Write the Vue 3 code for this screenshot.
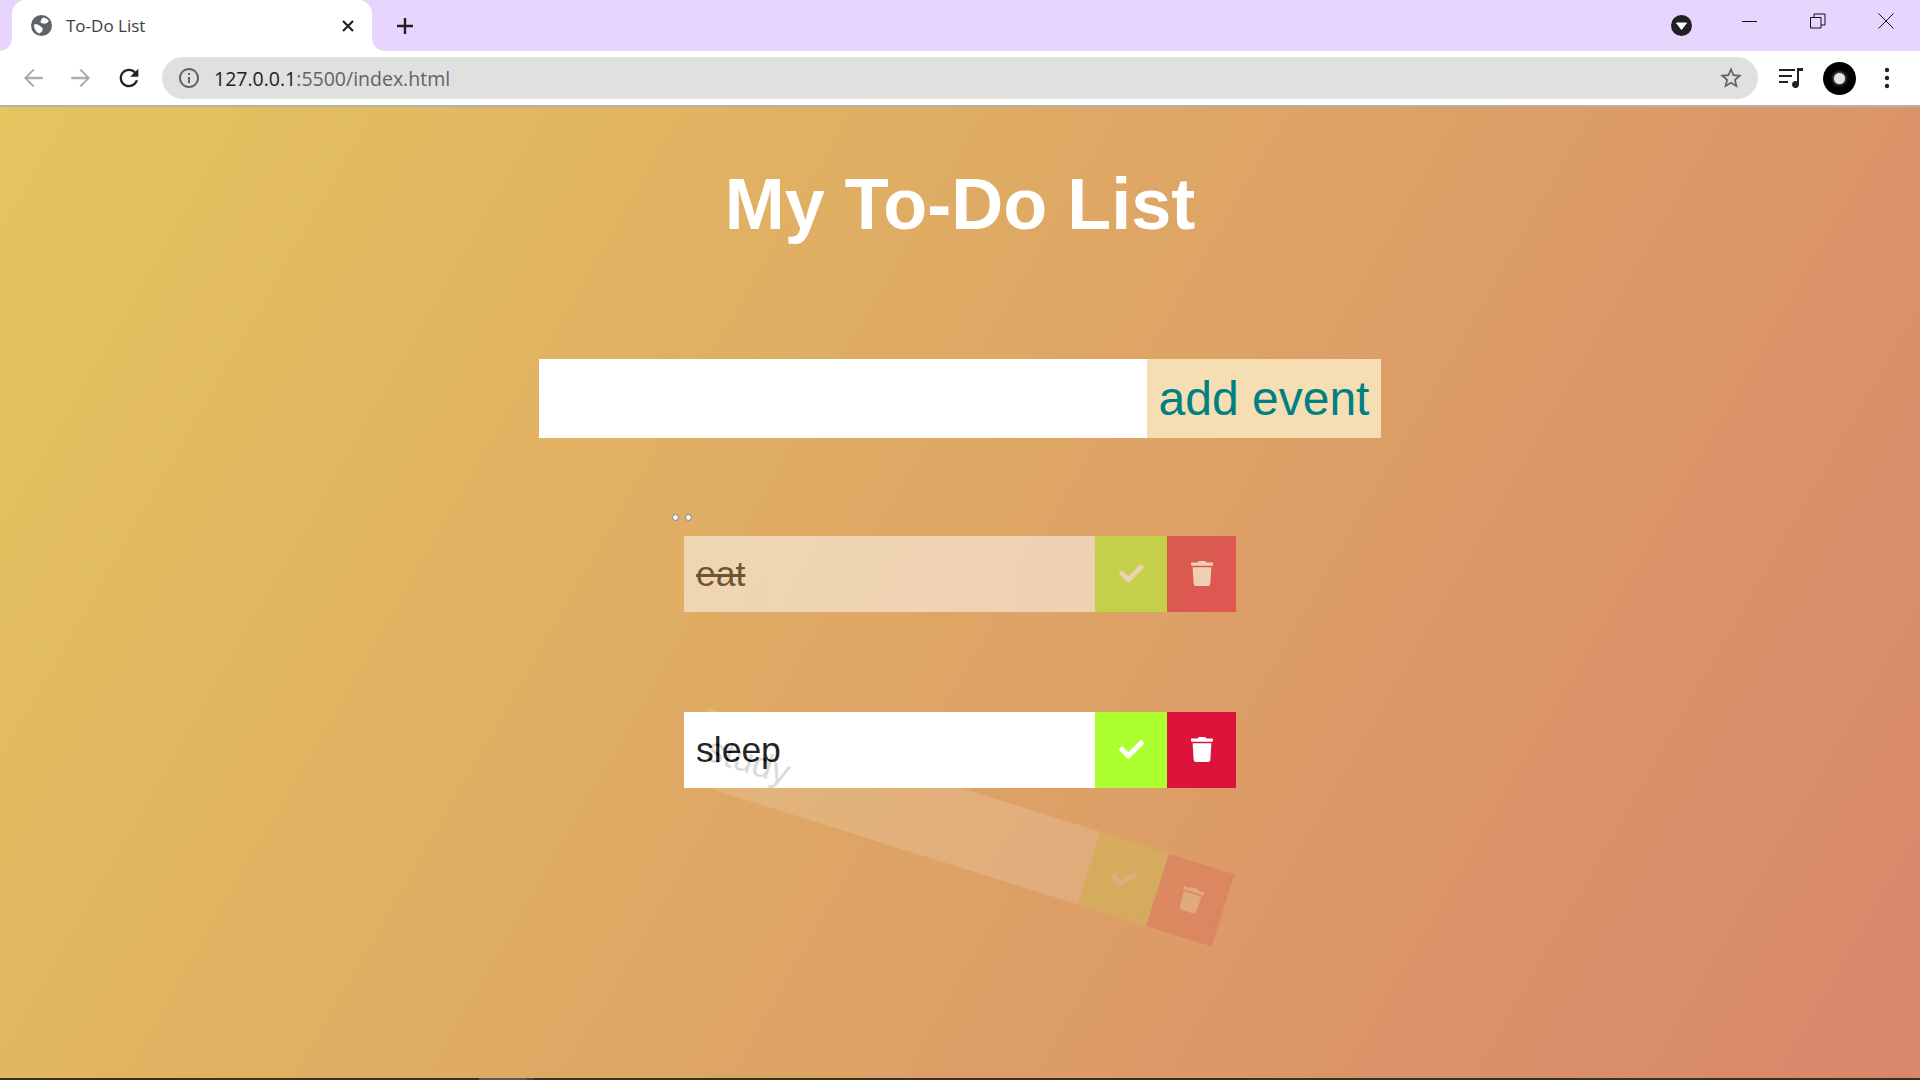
<script setup>
import { ref } from "vue";

const todos = ref([
  { id: 1, text: "eat", state: "completed" },
  { id: 2, text: "sleep", state: "" },
  { id: 3, text: "study", state: "fall" },
]);
const newTodo = ref("");
</script>

<template>
  <div class="screen">
    <div class="tabstrip">
      <div class="tab">
        <svg class="globe" viewBox="0 0 21 21" width="21" height="21">
          <circle cx="10.5" cy="10.5" r="10.5" fill="#5f6368" />
          <path d="M12 2.500c2.400.3 4.300 1.400 5.700 3.200-.5 1.600-1.900 2.800-3.800 2.900-1.700.1-3.400 0-4.200-1.100C9 6.300 10.600 3.900 12 2.500z" fill="#fff" />
          <path d="M3 9.500c1.800-.6 3.900-.2 5.300 1 1.500 1.100 3.200 1.600 3.400 3.300.2 2-1.500 3.700-3.100 4.700C5.500 17.500 3 14.500 3 9.500z" fill="#fff" />
        </svg>
        <span class="tab-title">To-Do List</span>
        <svg class="tab-close" viewBox="0 0 12 12" width="12" height="12">
          <path d="M1 1l10 10M11 1L1 11" stroke="#202124" stroke-width="2.200" fill="none" />
        </svg>
      </div>
      <svg class="new-tab" viewBox="0 0 18 18" width="18" height="18">
        <path d="M9 1v16M1 9h16" stroke="#202124" stroke-width="2.400" fill="none" />
      </svg>
      <div class="spacer"></div>
      <svg class="tab-search" viewBox="0 0 21 21" width="21" height="21">
        <circle cx="10.500" cy="10.500" r="10.500" fill="#202124" />
        <path d="M5.500 8h10l-5 6.500z" fill="#fff" stroke="#fff" stroke-linejoin="round" />
      </svg>
      <div class="win-controls">
        <svg viewBox="0 0 16 16" width="16" height="16">
          <path d="M0 8.500h15" stroke="#111" stroke-width="1" fill="none" />
        </svg>
        <svg viewBox="0 0 16 16" width="16" height="16">
          <path d="M.5 4.500h10.500v10.500H.5zM4 4.500V1h11v11h-4" stroke="#111" stroke-width="1" fill="none" />
        </svg>
        <svg viewBox="0 0 16 16" width="16" height="16">
          <path d="M.5.500l15 15M15.500.500l-15 15" stroke="#111" stroke-width="1" fill="none" />
        </svg>
      </div>
    </div>

    <div class="toolbar">
      <div class="nav-slot">
        <svg viewBox="0 0 24 24" width="28" height="28" fill="#a3a3a3">
          <path d="M20 11.300H6.900l5.900-5.900-.8-.8-7.300 7.400 7.300 7.400.8-.8-5.900-5.900H20z" stroke="#a3a3a3" stroke-width=".6" />
        </svg>
      </div>
      <div class="nav-slot">
        <svg viewBox="0 0 24 24" width="28" height="28" fill="#a3a3a3">
          <path d="M4 11.300h13.100l-5.900-5.900.8-.8 7.300 7.400-7.300 7.400-.8-.8 5.900-5.900H4z" stroke="#a3a3a3" stroke-width=".6" />
        </svg>
      </div>
      <div class="nav-slot">
        <svg viewBox="0 0 24 24" width="28" height="28" fill="#202124">
          <path d="M17.650 6.350C16.200 4.900 14.210 4 12 4c-4.420 0-7.990 3.580-7.990 8s3.570 8 7.990 8c3.730 0 6.840-2.550 7.730-6h-2.080c-.82 2.330-3.040 4-5.650 4-3.310 0-6-2.690-6-6s2.690-6 6-6c1.660 0 3.140.69 4.220 1.780L13 11h7V4l-2.350 2.350z" />
        </svg>
      </div>
      <div class="omnibox">
        <svg viewBox="0 0 24 24" width="24" height="24" fill="#5f6368">
          <path d="M11 7h2v2h-2zm0 4h2v6h-2zm1-9C6.480 2 2 6.480 2 12s4.480 10 10 10 10-4.480 10-10S17.520 2 12 2zm0 18c-4.410 0-8-3.590-8-8s3.590-8 8-8 8 3.590 8 8-3.590 8-8 8z" />
        </svg>
        <span class="url"><span class="host">127.0.0.1</span>:5500/index.html</span>
        <div class="spacer"></div>
        <svg viewBox="0 0 24 24" width="26" height="26" fill="#5f6368">
          <path d="M22 9.240l-7.190-.62L12 2 9.190 8.630 2 9.240l5.460 4.730L5.820 21 12 17.270 18.180 21l-1.630-7.030L22 9.240zM12 15.400l-3.760 2.270 1-4.280-3.320-2.880 4.380-.38L12 6.100l1.710 4.040 4.380.38-3.320 2.880 1 4.280L12 15.400z" />
        </svg>
      </div>
      <div class="tool-icons">
        <div class="nav-slot">
          <svg viewBox="0 0 24 24" width="24" height="24" fill="#202124">
            <path d="M0 3h16v2H0zM0 9h13v2H0zM0 15h9v2H0z" />
            <path d="M18 2h6v3h-4v13.500a3.500 3.500 0 1 1-2-3.150z" />
          </svg>
        </div>
        <div class="nav-slot">
          <div class="avatar"><span></span></div>
        </div>
        <div class="nav-slot">
          <svg viewBox="0 0 6 22" width="6" height="22" fill="#202124">
            <circle cx="3" cy="3" r="2.200" />
            <circle cx="3" cy="11" r="2.200" />
            <circle cx="3" cy="19" r="2.200" />
          </svg>
        </div>
      </div>
    </div>

    <main class="page">
      <h1>My To-Do List</h1>
      <form class="todo-form" @submit.prevent>
        <input v-model="newTodo" type="text" class="todo-input" />
        <button type="submit" class="add-btn">add event</button>
      </form>
      <div class="dots"><span></span><span></span></div>
      <ul class="todo-list">
        <li v-for="t in todos" :key="t.id" class="todo" :class="t.state">
          <span class="todo-text">{{ t.text }}</span>
          <button class="check-btn">
            <svg viewBox="0 0 512 512" width="25" height="25" fill="#fff">
              <path d="M173.898 439.404l-166.4-166.4c-9.997-9.997-9.997-26.206 0-36.204l36.203-36.204c9.997-9.998 26.207-9.998 36.204 0L192 312.69 432.095 72.596c9.997-9.997 26.207-9.997 36.204 0l36.203 36.204c9.997 9.997 9.997 26.206 0 36.204l-294.4 294.401c-9.998 9.997-26.207 9.997-36.204-.001z" />
            </svg>
          </button>
          <button class="trash-btn">
            <svg viewBox="0 0 448 512" width="22" height="25" fill="#fff">
              <path d="M432 32H312l-9.400-18.700A24 24 0 0 0 281.100 0H166.800a23.720 23.720 0 0 0-21.400 13.300L136 32H16A16 16 0 0 0 0 48v32a16 16 0 0 0 16 16h416a16 16 0 0 0 16-16V48a16 16 0 0 0-16-16zM53.200 467a48 48 0 0 0 47.900 45h245.800a48 48 0 0 0 47.900-45L416 128H32z" />
            </svg>
          </button>
        </li>
      </ul>
    </main>

    <div class="taskbar-edge"><span class="seg-a"></span><span class="seg-b"></span></div>
  </div>
</template>

<style scoped>
.screen {
  width: 1920px;
  height: 1080px;
  display: flex;
  flex-direction: column;
  overflow: hidden;
  font-family: "Liberation Sans", Arial, sans-serif;
}

.spacer {
  flex: 1;
}

.tabstrip {
  height: 51px;
  background: #e8d5fd;
  display: flex;
  align-items: flex-start;
  padding-left: 12px;
  flex-shrink: 0;
}

.tab {
  width: 360px;
  height: 51px;
  background: #fff;
  border-radius: 14px 14px 0 0;
  display: flex;
  align-items: center;
  padding: 0 18px 0 19px;
  box-sizing: border-box;
  position: relative;
}

.tab::before,
.tab::after {
  content: "";
  position: absolute;
  bottom: 0;
  width: 12px;
  height: 12px;
}

.tab::before {
  left: -12px;
  background: radial-gradient(circle at 0 0, #e8d5fd 11.500px, #fff 12px);
}

.tab::after {
  right: -12px;
  background: radial-gradient(circle at 100% 0, #e8d5fd 11.500px, #fff 12px);
}

.tab-title {
  margin-left: 14px;
  font-family: "Open Sans", sans-serif;
  font-size: 17px;
  color: #3c4043;
  flex: 1;
}

.new-tab {
  margin: 17px 0 0 24px;
}

.tab-search {
  margin: 15px 50px 0 0;
}

.win-controls {
  display: flex;
  gap: 52px;
  margin: 13px 26px 0 0;
}

.toolbar {
  height: 56px;
  background: #fff;
  border-bottom: 2px solid #b1b1b1;
  box-sizing: border-box;
  display: flex;
  align-items: center;
  padding: 0 9px;
  flex-shrink: 0;
}

.nav-slot {
  width: 48px;
  height: 48px;
  display: flex;
  align-items: center;
  justify-content: center;
  flex-shrink: 0;
}

.omnibox {
  flex: 1;
  height: 42px;
  margin-left: 9px;
  background: #e0e0e0;
  border-radius: 21px;
  display: flex;
  align-items: center;
  padding: 0 14px 0 15px;
}

.url {
  margin-left: 13px;
  font-family: "Open Sans", sans-serif;
  font-size: 19.500px;
  color: #5f6368;
}

.host {
  color: #202124;
}

.tool-icons {
  display: flex;
  margin-left: 9px;
}

.avatar {
  width: 33px;
  height: 33px;
  border-radius: 50%;
  background: #000;
  display: flex;
  align-items: center;
  justify-content: center;
}

.avatar span {
  width: 11px;
  height: 11px;
  border-radius: 50%;
  background: #e4e4e4;
  box-shadow: 0 0 3px 1px #777;
}

.page {
  flex: 1;
  background: linear-gradient(120deg, #e4c55e, #d8866c);
  display: flex;
  flex-direction: column;
  align-items: center;
  overflow: hidden;
}

h1 {
  margin: 56px 0 0;
  font-size: 72px;
  font-weight: 700;
  line-height: 83px;
  color: #fff;
}

.todo-form {
  display: flex;
  margin-top: 113px;
  height: 79px;
}

.todo-input {
  width: 608px;
  border: none;
  outline: none;
  background: #fff;
  padding: 0 12px;
  box-sizing: border-box;
  font-size: 35px;
  font-family: inherit;
}

.add-btn {
  width: 234px;
  border: none;
  background: #f5deb3;
  color: #008080;
  font-size: 48px;
  font-family: inherit;
  padding: 0;
}

.dots {
  width: 570px;
  margin: 76px 0 0 -6px;
  height: 7px;
  display: flex;
  gap: 6px;
}

.dots span {
  width: 5px;
  height: 5px;
  border-radius: 50%;
  background: #f4f4f4;
  border: 1px solid #80808c;
}

.todo-list {
  list-style: none;
  margin: 15px 0 0;
  padding: 0;
  width: 552px;
}

.todo {
  display: flex;
  height: 76px;
  background: #fff;
  margin-bottom: 100px;
  align-items: stretch;
}

.todo.completed {
  opacity: 0.5;
}

.todo.completed .todo-text {
  text-decoration: line-through;
}

.todo.fall {
  opacity: 0.14;
  transform: translateY(-98.500px) rotate(17.500deg);
}

.todo-text {
  flex: 1;
  padding-left: 12px;
  font-size: 35.500px;
  line-height: 76px;
  color: #000;
}

.check-btn,
.trash-btn {
  border: none;
  padding: 0 0 2px;
  display: flex;
  align-items: center;
  justify-content: center;
}

.check-btn {
  width: 72px;
  background: #adff2f;
}

.trash-btn {
  width: 69px;
  background: #dc143c;
}

.taskbar-edge {
  height: 2px;
  background: #37321f;
  flex-shrink: 0;
  display: flex;
}

.seg-a {
  width: 48px;
  margin-left: 479px;
  background: #5d5750;
}

.seg-b {
  width: 7px;
  background: #45413a;
}
</style>

<style>
body {
  margin: 0;
}
</style>
